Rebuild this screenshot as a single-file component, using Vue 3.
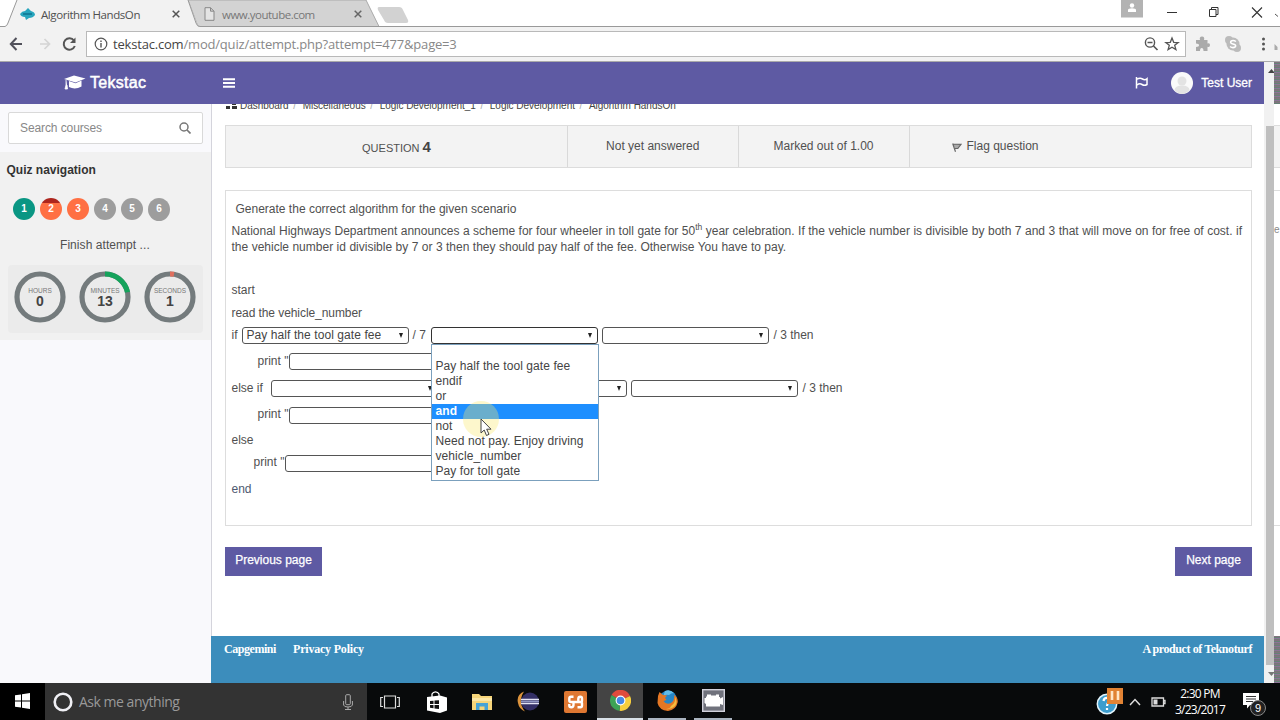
<template>
  <div class="screen">
    <!-- browser tabs -->
    <div class="tabs">
      <svg class="tabs-bg" width="1280" height="28" viewBox="0 0 1280 28">
        <path d="M188 0H366L379 26.5H198Z" fill="#d3d3d3" stroke="#aaa" />
        <path d="M0 26.500H6L17 0H188L198 26.500H1280V29H0Z" fill="#f2f2f2" />
        <path d="M0 26.500H5Q7 26 8 23L17 0M188 0L196 23Q197 26.500 200 26.500H1280" fill="none" stroke="#999" />
        <path d="M379 7H399Q402 7 403 10L408 20Q409 23 406 23H388Q385 23 384 20L378 10Q377 7 379 7Z" fill="#d2d2d2" />
      </svg>
      <div class="tab tab--active">
        <svg width="16" height="12" viewBox="0 0 16 12"><path d="M0 6Q2 3 5 3L8 0L11 3Q15 4 15 7Q13 10 9 10L6 12L5 9Q1 9 0 6Z" fill="#27a5bd" /><path d="M3 6H12" stroke="#137f9b" stroke-width="2" /></svg>
        <span>Algorithm HandsOn</span>
        <svg class="tab-close" width="8" height="8" viewBox="0 0 8 8"><path d="M.7.7L7.300 7.300M7.300.7L.7 7.300" stroke="#555" stroke-width="1.500" /></svg>
      </div>
      <div class="tab tab--idle">
        <svg width="11" height="14" viewBox="0 0 11 14"><path d="M1 .7H6.500L10 4.200V13.300H1ZM6.500.7V4.200H10" fill="#e4e4e4" stroke="#888" /></svg>
        <span>www.youtube.com</span>
        <svg class="tab-close" width="8" height="8" viewBox="0 0 8 8"><path d="M.7.7L7.300 7.300M7.300.7L.7 7.300" stroke="#666" stroke-width="1.500" /></svg>
      </div>
      <svg class="win-buttons" width="160" height="26" viewBox="0 0 160 26">
        <rect x="1" width="22" height="17.500" fill="#b3b3b3" />
        <circle cx="12" cy="5.500" r="2.200" fill="#fff" /><path d="M8 12V10Q8 8.300 12 8.300Q16 8.300 16 10V12Z" fill="#fff" />
        <path d="M47 12.500H57" stroke="#333" />
        <path d="M89.500 9.500H96V16.500H89.500ZM91.500 9.500V7.500H98V14.500H96" fill="none" stroke="#333" />
        <path d="M132 7.500L142 17.500M142 7.500L132 17.500" stroke="#333" stroke-width="1.100" />
        <path d="M155 14L158 16.500" stroke="#555" />
      </svg>
    </div>

    <!-- address bar -->
    <div class="toolbar">
      <svg class="nav-icons" width="86" height="34" viewBox="0 0 86 34">
        <path d="M22 17H11M16.500 11L10.800 17L16.500 23" fill="none" stroke="#50505a" stroke-width="2" />
        <path d="M40 17H49M44.500 12L49.500 17L44.500 22" fill="none" stroke="#d4d4d4" stroke-width="1.700" />
        <path d="M74 13.500A5.700 5.700 0 1 0 74.800 19" fill="none" stroke="#555" stroke-width="2" /><path d="M75.500 10.500V16H70Z" fill="#555" />
      </svg>
      <div class="address">
        <svg width="14" height="14" viewBox="0 0 14 14"><circle cx="7" cy="7" r="5.800" fill="none" stroke="#555" stroke-width="1.200" /><path d="M7 6V10.500M7 3.500V5" stroke="#555" stroke-width="1.400" /></svg>
        <span class="address-url"><b>tekstac.com</b>/mod/quiz/attempt.php?attempt=477&amp;page=3</span>
        <svg class="address-icons" width="37" height="16" viewBox="0 0 37 16">
          <circle cx="6" cy="6.500" r="4.600" fill="none" stroke="#555" stroke-width="1.400" /><path d="M9.500 10L13.500 14M3.500 6.500H8.500" stroke="#555" stroke-width="1.700" />
          <path d="M28 2L29.700 6.300L34.200 6.500L30.700 9.300L31.900 13.600L28 11.200L24.100 13.600L25.300 9.300L21.800 6.500L26.300 6.300Z" fill="none" stroke="#555" stroke-width="1.300" />
        </svg>
      </div>
      <svg class="ext-icons" width="94" height="34" viewBox="0 0 94 34">
        <path d="M10 13H14Q13 9.500 16 9.500Q19 9.500 18 13H21.500V16.500Q24 15.500 24 18Q24 20.500 21.500 19.700V24H17.500Q17.500 21 15.700 21Q14 21 14 24H10V20Q13 20 13 18.300Q13 16.500 10 16.500Z" fill="#aaa" />
        <g fill="#bbb"><circle cx="47" cy="17" r="6.500" /><circle cx="43" cy="13" r="4" /><circle cx="51" cy="21" r="4" /></g>
        <path d="M50 14.500Q47 12.500 44.800 14.300Q44 16.500 47 17Q50.500 17.800 49.500 19.600Q47 21.700 44 19.500" fill="none" stroke="#fff" stroke-width="1.500" />
        <g fill="#555"><circle cx="77.500" cy="12" r="1.500" /><circle cx="77.500" cy="17" r="1.500" /><circle cx="77.500" cy="22" r="1.500" /></g>
        <path d="M88.500 17L91.500 20V23H88.500Z" fill="#aaa" />
      </svg>
    </div>

    <div class="page">
      <div class="site">
        <header class="site-header">
          <div class="brand">
            <svg width="22" height="16" viewBox="0 0 22 16"><path d="M0 4L10 .500L21.500 3.500L11.500 7.500Z" fill="#fff" /><path d="M5 6V12Q11 15 17.500 11.500V5.500L11.500 8.300Z" fill="#fff" /><path d="M2 5V10L1 14H3.500L3 10" fill="#fff" stroke="#fff" stroke-width=".8" /></svg>
            <span>Tekstac</span>
          </div>
          <svg class="menu-icon" width="12" height="10" viewBox="0 0 12 10"><path d="M0 1.200H12M0 5H12M0 8.800H12" stroke="#fff" stroke-width="2" /></svg>
          <div class="user">
            <svg width="13" height="12" viewBox="0 0 13 12"><path d="M1.500 0V11.500M2 2.200Q5 .5 7.500 2T12 1.700V7.500Q9.500 9 7 7.500T2 8" fill="none" stroke="#fff" stroke-width="1.500" /></svg>
            <svg class="avatar" width="22" height="22" viewBox="0 0 22 22"><circle cx="11" cy="11" r="11" fill="#fafafa" /><circle cx="11" cy="9" r="4.500" fill="#e3e3e3" /><path d="M3.500 18Q4 13.500 11 13.500T18.500 18Q15 22 11 22T3.500 18Z" fill="#e3e3e3" /></svg>
            <span>Test User</span>
          </div>
        </header>

        <div class="columns">
          <aside class="sidebar">
            <div class="search-wrap">
              <div class="search">
                <span>Search courses</span>
                <svg width="12" height="12" viewBox="0 0 12 12"><circle cx="5" cy="5" r="4" fill="none" stroke="#777" stroke-width="1.500" /><path d="M8 8L11.500 11.500" stroke="#777" stroke-width="1.700" /></svg>
              </div>
            </div>
            <div class="quiz-nav">
              <h2>Quiz navigation</h2>
              <div class="bullets">
                <span v-for="n in 6" :key="n" class="bullet" :class="bulletClass[n - 1]">{{ n }}</span>
              </div>
              <div class="finish">Finish attempt ...</div>
              <div class="timer">
                <div v-for="t in timers" :key="t.label" class="dial">
                  <svg width="52" height="52" viewBox="0 0 52 52">
                    <circle cx="26" cy="26" r="23" fill="none" stroke="#747b7d" stroke-width="5.200" />
                    <path v-if="t.arc" :d="t.arc" fill="none" :stroke="t.color" stroke-width="5.200" />
                  </svg>
                  <div class="dial-text"><small>{{ t.label }}</small><b>{{ t.value }}</b></div>
                </div>
              </div>
            </div>
          </aside>

          <main class="content">
            <div class="crumbs-clip">
              <div class="crumbs">
                <svg width="11" height="10" viewBox="0 0 11 10"><path d="M1 0H5V4H1ZM6 1H10V5H6ZM0 6H4V9H0ZM6 6H11V9H6Z" fill="#333" /></svg>
                <template v-for="(c, i) in crumbs" :key="c"><i v-if="i">/</i><span>{{ c }}</span></template>
              </div>
            </div>
            <div class="info">
              <div class="info-no">QUESTION <b>4</b></div>
              <div class="info-state">Not yet answered</div>
              <div class="info-mark">Marked out of 1.00</div>
              <div class="info-flag">
                <svg width="10" height="11" viewBox="0 0 10 11"><path d="M.7 1.500L3.500 9.800M1 2L9 2.300L5.800 6.500L3 6.500" fill="#aaa" stroke="#666" stroke-width="1.200" /></svg>
                <span>Flag question</span>
              </div>
            </div>

            <div class="question">
              <p class="line title">Generate the correct algorithm for the given scenario</p>
              <div class="scenario">
                <p class="first">National Highways Department announces a scheme for four wheeler in toll gate for 50<sup>th</sup> year celebration. If the vehicle number is divisible by both 7 and 3 that will move on for free of cost. if</p>
                <p class="second">the vehicle number id divisible by 7 or 3 then they should pay half of the fee. Otherwise You have to pay.</p>
              </div>
              <p class="line start">start</p>
              <p class="line read">read the vehicle_number</p>
              <div class="line cond-if">
                <span class="w-if">if</span>
                <span class="select">Pay half the tool gate fee</span>
                <span class="w-div">/ 7</span>
                <span class="select select--open">
                  <ul class="menu">
                    <li v-for="o in options" :key="o" :class="{ hover: o === 'and' }">{{ o }}</li>
                  </ul>
                </span>
                <span class="select last"></span>
                <span class="w-then">/ 3 then</span>
              </div>
              <div class="line print1"><span>print "</span><span class="select"></span></div>
              <div class="line cond-else">
                <span class="w-elseif">else if</span>
                <span class="select"></span>
                <span class="w-div"></span>
                <span class="select"></span>
                <span class="select last"></span>
                <span class="w-then">/ 3 then</span>
              </div>
              <div class="line print2"><span>print "</span><span class="select"></span></div>
              <p class="line else">else</p>
              <div class="line print3"><span>print "</span><span class="select"></span></div>
              <p class="line end">end</p>
            </div>

            <div class="pager">
              <button class="prev">Previous page</button>
              <button class="next">Next page</button>
            </div>
            <footer class="footer">
              <span class="f1">Capgemini</span><span class="f2">Privacy Policy</span><span class="f3">A product of Teknoturf</span>
            </footer>
          </main>
        </div>
      </div>
      <div class="scrollbar">
        <svg width="10" height="6" viewBox="0 0 10 6"><path d="M4 5L7.500 1L10 4V5Z" fill="#444" /></svg>
        <div class="thumb"></div>
        <svg width="10" height="6" viewBox="0 0 10 6"><path d="M4 1L7.500 5L10 2V1Z" fill="#777" /></svg>
      </div>
      <div class="edge">
        <div class="noise noise-top"></div>
        <div class="edge-mid"><div class="edge-info"></div><div class="edge-box"><span>e</span></div></div>
        <div class="noise noise-bottom"></div>
      </div>
    </div>

    <div class="taskbar">
      <div class="start-btn"><svg width="15" height="16" viewBox="0 0 15 16"><path d="M0 2.300L6 1.400V7.500H0ZM7 1.200L15 0V7.500H7ZM0 8.500H6V14.600L0 13.700ZM7 8.500H15V16L7 14.800Z" fill="#fff" /></svg></div>
      <div class="cortana">
        <svg width="20" height="20" viewBox="0 0 20 20"><circle cx="10" cy="10" r="8.300" fill="none" stroke="#f0f0f5" stroke-width="2.600" /></svg>
        <span>Ask me anything</span>
        <svg class="mic" width="10" height="16" viewBox="0 0 10 16"><rect x="2.700" y=".7" width="4.600" height="10" rx="1" fill="none" stroke="#aaa" /><path d="M.6 7V11Q1 13 5 13T9.400 11V7M5 13V15.500M2 15.500H8" fill="none" stroke="#aaa" /></svg>
      </div>
      <div class="app taskview"><svg width="20" height="14" viewBox="0 0 20 14"><path d="M4.500 1H15.500V13H4.500ZM3 2.500H.7V11.500H3M17 2.500H19.300V11.500H17" fill="none" stroke="#ddd" stroke-width="1.200" /></svg></div>
      <div class="app store"><svg width="20" height="22" viewBox="0 0 20 22"><path d="M0 6L13 4.500L20 6.500V19.500L13 22L0 19.500Z" fill="#fff" /><path d="M5 6V3Q6 .8 8.500.8T12 3V6" fill="none" stroke="#fff" stroke-width="1.300" /><path d="M3 10L6.500 9.700V13H3ZM7.500 9.600L12 9.200V13H7.500ZM3 14H6.500V17.200L3 16.800ZM7.500 14H12V18L7.500 17.400Z" fill="#111" /></svg></div>
      <div class="app"><svg width="20" height="18" viewBox="0 0 20 18"><path d="M0 1H7L9 3H20V17H0Z" fill="#f6d57a" /><path d="M0 5H20V8H0Z" fill="#fbe6a5" /><path d="M4 17V10H16V17H12.500V13.500H7.500V17Z" fill="#46a3d6" /></svg></div>
      <div class="app"><svg width="23" height="21" viewBox="0 0 23 21"><path d="M7 .5Q-1 4 1 12Q2 18 8 20.500Q3 14 4 8Q4.500 4 7 .5Z" fill="#dc933c" /><circle cx="13" cy="10.500" r="9" fill="#332f65" /><path d="M4 8.500H22M4 12.500H22" stroke="#e3e3f3" stroke-width="1.500" /><path d="M4 10.500H22" stroke="#8f95c2" stroke-width="1.500" /></svg></div>
      <div class="app xampp"><svg width="23" height="22" viewBox="0 0 23 22"><rect width="23" height="22" rx="2" fill="#df7832" /><path d="M9.500 5.800H7Q5.300 5.800 5.300 7.500V9.500Q5.300 11 7 11H16.500Q18 11 18 9.500V7.500Q18 5.800 16.300 5.800Q14.300 5.800 14.300 8V11M9.500 11V13.800Q9.500 16.200 7.300 16.200Q5.300 16.200 5.300 14.500V13M13.500 16.200H16.300Q18 16.200 18 14.500V12.500Q18 11 16.500 11" fill="none" stroke="#fff" stroke-width="2.400" /></svg></div>
      <div class="app app--active"><svg width="21" height="21" viewBox="0 0 21 21"><path d="M10.500 10.500L1.600 5A10.300 10.300 0 0 1 20 6Z" fill="#df4b3c" /><path d="M10.500 10.500L20 6A10.300 10.300 0 0 1 9.500 20.800Z" fill="#f6ce3e" /><path d="M10.500 10.500L9.500 20.800A10.300 10.300 0 0 1 1.600 5Z" fill="#3da356" /><circle cx="10.500" cy="10.500" r="4.900" fill="#fff" /><circle cx="10.500" cy="10.500" r="3.800" fill="#4688e5" /></svg></div>
      <div class="app app--run firefox"><svg width="21" height="21" viewBox="0 0 21 21"><circle cx="11" cy="9.500" r="9" fill="#2586c7" /><path d="M8 1Q13-1 17 3Q14 3 12 5Q7 4 6 7Z" fill="#61bbe8" /><path d="M1 6L2.500 2L6 5L10 5.500L8 8L9.500 10L6.500 11Q9 15 14 13Q18 10 17 5Q21 7 20.800 12Q19 20 11 21Q2 20 .5 13Z" fill="#e47724" /><path d="M14 16Q19 13 18 7Q21 12 18 16Q14 20 9 19Q13 19 14 16Z" fill="#f4bd3f" /></svg></div>
      <div class="app app--run recorder"><svg width="23" height="23" viewBox="0 0 23 23"><rect x=".7" y=".7" width="21.600" height="21.600" fill="#70727c" stroke="#d2d2dc" stroke-width="1.400" /><path d="M4 7.500H5V5.500H9V6.500H14V5.500H17V8H18V9.500L21 8V16L18 15V17.500H4V15L2.500 14V9H4Z" fill="#fff" /></svg></div>
      <div class="tray">
        <svg class="tray-help" width="29" height="28" viewBox="0 0 29 28"><circle cx="11" cy="16" r="9.700" fill="#3d9dce" stroke="#e3f4fb" stroke-width="1.500" /><path d="M7.500 13Q8 9.500 11.500 10Q14.500 11 13 14Q11 15.500 11 18M11 20V22" fill="none" stroke="#fff" stroke-width="2.200" /><rect x="11" y="0" width="16" height="16" fill="#e18334" /><path d="M16 3V12M22 3V12" stroke="#ffe6c8" stroke-width="2.600" /></svg>
        <svg class="tray-up" width="12" height="8" viewBox="0 0 12 8"><path d="M1 7L6 1.500L11 7" fill="none" stroke="#ddd" stroke-width="1.500" /></svg>
        <svg class="tray-battery" width="15" height="10" viewBox="0 0 15 10"><path d="M1 1H12.500V9H1ZM12.500 3.500H14V6.500H12.500" fill="none" stroke="#ddd" stroke-width="1.300" /><path d="M2.500 2.500H6.500V7.500H2.500Z" fill="#ddd" /></svg>
        <div class="clock"><span>2:30 PM</span><span>3/23/2017</span></div>
        <div class="notify">
          <svg width="16" height="16" viewBox="0 0 16 16"><path d="M0 0H16V12H7L4 15.500V12H0Z" fill="#fff" /><path d="M3 3.500H13M3 6H13M3 8.500H10" stroke="#333" /></svg>
          <span>9</span>
        </div>
      </div>
    </div>

    <!-- pointer with click highlight -->
    <div class="pointer">
      <div class="halo"></div>
      <svg width="12" height="19" viewBox="0 0 12 19"><path d="M1 1V15L4.200 12L6.500 17.500L9 16.300L6.700 11.200H11Z" fill="#fff" stroke="#444" /></svg>
    </div>
  </div>
</template>

<script setup>
const bulletClass = ['done', 'partial', 'current', '', '', 'tail']

const timers = [
  { label: 'HOURS', value: 0 },
  { label: 'MINUTES', value: 13, color: '#15a35b', arc: 'M26 3A23 23 0 0 1 48.5 21.300' },
  { label: 'SECONDS', value: 1, color: '#e0705f', arc: 'M26 3A23 23 0 0 1 30 3.300' }
]

const crumbs = ['Dashboard', 'Miscellaneous', 'Logic Development_1', 'Logic Development', 'Algorithm HandsOn']

const options = [
  '',
  'Pay half the tool gate fee',
  'endif',
  'or',
  'and',
  'not',
  'Need not pay. Enjoy driving',
  'vehicle_number',
  'Pay for toll gate'
]
</script>

<style>
body {
  overflow: hidden;
}
</style>

<style scoped>
* {
  box-sizing: border-box;
}

.screen {
  width: 1280px;
  height: 720px;
  position: relative;
  display: flex;
  flex-direction: column;
  overflow: hidden;
  background: #fff;
  color: #505050;
  font-family: "Liberation Sans", Arial, sans-serif;
  font-size: 12px;
}

svg {
  display: block;
  flex: none;
}

p,
h2,
ul {
  margin: 0;
  padding: 0;
}

.tabs {
  height: 27px;
  position: relative;
  display: flex;
  font-family: "Open Sans", "Noto Sans", sans-serif;
  font-size: 11.5px;
}

.tabs-bg {
  position: absolute;
  left: 0;
  top: 0;
}

.tab {
  position: relative;
  display: flex;
  align-items: center;
  height: 28px;
  white-space: nowrap;
}

.tab--active {
  width: 180px;
  padding-left: 20px;
}

.tab--active span {
  margin-left: 5px;
  letter-spacing: -0.42px;
}

.tab--idle {
  width: 182px;
  padding-left: 24px;
}

.tab--idle span {
  margin-left: 7px;
  color: #777;
  letter-spacing: -0.5px;
}

.tab-close {
  margin-left: auto;
}

.win-buttons {
  margin-left: auto;
  position: relative;
}

.toolbar {
  height: 35px;
  display: flex;
  background: #f2f2f2;
  border-bottom: 1px solid #aaa;
}

.address {
  width: 1100px;
  height: 26px;
  margin-top: 4px;
  padding-left: 7px;
  display: flex;
  align-items: center;
  background: #fff;
  border: 1px solid #b9b9b9;
  font-family: "Open Sans", "Noto Sans", sans-serif;
}

.address-url {
  margin-left: 5px;
  color: #888;
  font-size: 13px;
  letter-spacing: -0.19px;
  white-space: nowrap;
}

.address-url b {
  color: #444;
  font-weight: 400;
}

.address-icons {
  margin-left: auto;
  margin-right: 4px;
}

.page {
  height: 621px;
  display: flex;
}

.site {
  width: 1264px;
}

.site-header {
  height: 42px;
  display: flex;
  align-items: center;
  background: #5e5aa3;
  color: #fff;
}

.brand {
  width: 223px;
  padding-left: 64px;
  display: flex;
  align-items: center;
  font-size: 16px;
  letter-spacing: 0.3px;
  -webkit-text-stroke: 0.5px #fff;
}

.brand span {
  margin-left: 4px;
}

.user {
  margin-left: auto;
  margin-right: 12px;
  display: flex;
  align-items: center;
  font-size: 12px;
  -webkit-text-stroke: 0.3px #fff;
}

.avatar {
  margin: 0 8px 0 23px;
}

.columns {
  height: 579px;
  display: flex;
}

.sidebar {
  width: 212px;
  background: #f9f9fc;
  border-right: 1px solid #d4d4dc;
}

.search-wrap {
  height: 48px;
  padding: 8px 8px 0;
}

.search {
  height: 32px;
  padding: 0 11px 1px;
  display: flex;
  align-items: center;
  justify-content: space-between;
  border: 1px solid #d9d9d9;
  border-radius: 2px;
  background: #fff;
  color: #888;
}

.search span {
  letter-spacing: -0.1px;
}

.quiz-nav {
  height: 188px;
  background: #f1f1f1;
}

.quiz-nav h2 {
  height: 36px;
  padding-left: 6.5px;
  line-height: 36px;
  color: #333;
  font-size: 12px;
}

.bullets {
  height: 42px;
  padding: 10px 0 0 13px;
  display: flex;
  gap: 5px;
}

.bullet {
  width: 22px;
  height: 22px;
  border-radius: 50%;
  background: #9d9d9d;
  color: #fff;
  font-size: 10px;
  font-weight: bold;
  line-height: 22px;
  text-align: center;
}

.bullet.done {
  background: #0a9683;
}

.bullet.partial {
  background: linear-gradient(#ad251d 5px, #ff7043 5px);
}

.bullet.current {
  background: #ff7043;
}

.bullet.tail {
  height: 23px;
}

.finish {
  height: 34px;
  padding-left: 60px;
  line-height: 30px;
  letter-spacing: 0.06px;
}

.timer {
  height: 68px;
  margin: 1px 8px 0;
  padding: 6px 7px 0 6px;
  display: flex;
  justify-content: space-between;
  border-radius: 4px;
  background: #ebebeb;
}

.dial {
  position: relative;
  width: 52px;
  height: 52px;
}

.dial-text {
  position: absolute;
  inset: 0;
  padding-top: 16px;
  display: flex;
  flex-direction: column;
  align-items: center;
  color: #444;
}

.dial-text small {
  color: #777;
  font-size: 6.5px;
  line-height: 7px;
}

.dial-text b {
  font-size: 14px;
  line-height: 15px;
}

.content {
  width: 1052px;
  display: flex;
  flex-direction: column;
}

/* the trail is scrolled halfway under the header */
.crumbs-clip {
  height: 21px;
  overflow: hidden;
}

.crumbs {
  margin-top: -6px;
  padding-left: 14px;
  display: flex;
  align-items: center;
  height: 14px;
  font-size: 10px;
  letter-spacing: -0.03px;
  color: #444;
  white-space: nowrap;
}

.crumbs span {
  margin-left: 3px;
}

.crumbs i {
  width: 10px;
  margin-left: 1px;
  text-align: center;
  font-style: normal;
  color: #aaa;
}

.info {
  width: 1027px;
  height: 43px;
  margin-left: 13px;
  display: flex;
  border: 1px solid #dcdcdc;
  background: #f3f3f3;
  line-height: 40px;
  text-align: center;
}

.info-no {
  width: 342px;
  border-right: 1px solid #d9d9d9;
  font-size: 11px;
  line-height: 42px;
}

.info-no b {
  color: #444;
  font-size: 15px;
}

.info-state {
  width: 170.5px;
  border-right: 1px solid #d9d9d9;
}

.info-mark {
  width: 171px;
  border-right: 1px solid #d9d9d9;
}

.info-flag {
  padding-left: 42px;
  display: flex;
}

.info-flag svg {
  margin: 16px 5px 0 0;
}

.question {
  width: 1027px;
  height: 336px;
  margin: 22px 0 0 13px;
  padding: 10px 9px 0 5.5px;
  border: 1px solid #ddd;
}

.line {
  height: 16px;
  display: flex;
  line-height: 16px;
  white-space: pre;
}

.title {
  padding-left: 4px;
}

.scenario {
  margin-top: 6px;
  line-height: 16px;
}

.scenario p {
  height: 16px;
  width: 1010.5px;
  white-space: nowrap;
}

.scenario .first {
  text-align: justify;
  text-align-last: justify;
  white-space: normal;
}

.scenario .second {
  word-spacing: 0.12px;
}

.scenario sup {
  font-size: 8.5px;
  line-height: 0;
}

.start { margin-top: 27px; }
.read { margin-top: 7px; letter-spacing: -0.07px; }
.cond-if { margin-top: 6px; }
.print1 { margin-top: 10px; padding-left: 26px; }
.cond-else { margin-top: 11px; }
.print2 { margin-top: 10px; padding-left: 26px; }
.else { margin-top: 10px; }
.print3 { margin-top: 6px; padding-left: 22px; }
.end { margin-top: 11px; color: #4d5a70; }

.print1 > span:first-child,
.print2 > span:first-child,
.print3 > span:first-child {
  width: 31px;
}

.w-if { width: 10px; }
.w-elseif { width: 39px; }

.w-div {
  width: 22px;
  padding-left: 4px;
}

.w-then {
  margin-left: 5px;
}

.select {
  position: relative;
  flex: none;
  width: 167px;
  height: 17px;
  padding-left: 4px;
  border: 1px solid #555;
  border-radius: 3px;
  background: #fff;
  color: #444;
  line-height: 15px;
  letter-spacing: 0.08px;
}

.print2 .select,
.print3 .select {
  margin-top: 0.5px;
}

.select::after {
  content: "";
  position: absolute;
  right: 5px;
  top: 5px;
  border: 2.5px solid transparent;
  border-top: 5px solid #222;
  border-bottom: 0;
}

.select.last {
  margin-left: 4px;
}

.select--open {
  border-color: #333;
}

.menu {
  position: absolute;
  z-index: 5;
  left: -1px;
  top: 16px;
  width: 168px;
  height: 137px;
  border: 1px solid #7ba0bd;
  background: #fff;
  list-style: none;
  color: #444;
}

.menu li {
  height: 15px;
  padding-left: 4px;
  line-height: 15px;
}

.menu li:first-child {
  height: 14px;
}

.menu .hover {
  background: #1e8fff;
  color: #fff;
  font-weight: bold;
}

.pager {
  height: 110px;
  padding: 21px 12px 0 13px;
  display: flex;
  justify-content: space-between;
}

.pager button {
  height: 29px;
  padding: 0 0 3px;
  border: 0;
  background: #5e5aa3;
  color: #fff;
  font: 12px "Liberation Sans", Arial, sans-serif;
  -webkit-text-stroke: 0.25px #fff;
}

.prev { width: 97px; }
.next { width: 77px; }

.footer {
  flex: 1;
  margin-left: -1px;
  padding: 5px 12px 0 13px;
  display: flex;
  background: #3c8dbc;
  color: #fff;
  font: bold 12px/16px "Liberation Serif", "Times New Roman", serif;
}

.f1 {
  width: 52px;
  letter-spacing: -0.45px;
}

.f2 {
  margin-left: 17px;
  letter-spacing: -0.2px;
}

.f3 {
  margin-left: auto;
  letter-spacing: -0.42px;
}

.scrollbar {
  width: 10px;
  padding: 6px 0 5px;
  display: flex;
  flex-direction: column;
  background: #f1f1f1;
}

.thumb {
  width: 8px;
  height: 539px;
  margin: 52px 0 6px 2px;
  background: #bfbfbf;
}

.edge {
  width: 6px;
  display: flex;
  flex-direction: column;
}

.noise {
  background: repeating-linear-gradient(#81727e 0 1px, #658276 1px 2px, #8c7397 2px 3px, #777 3px 4px);
}

.noise-top { height: 42px; }
.noise-bottom { height: 47px; }

.edge-mid {
  height: 532px;
  padding-top: 21px;
}

.edge-info {
  height: 43px;
  border: solid #ddd;
  border-width: 1px 0;
  background: #f3f3f3;
}

.edge-box {
  height: 336px;
  margin-top: 22px;
  padding-top: 33px;
  border: solid #ddd;
  border-width: 1px 0;
  overflow: hidden;
  color: #888;
  font-size: 10px;
}

.taskbar {
  height: 37px;
  display: flex;
  background: #080a0b;
  color: #fff;
}

.start-btn {
  width: 45px;
  padding: 10px 0 0 15px;
  background: #000;
}

.cortana {
  width: 322px;
  padding: 0 14px 0 8px;
  display: flex;
  align-items: center;
  background: #333;
  color: #999;
  font-family: "Open Sans", "Noto Sans", sans-serif;
  font-size: 14px;
}

.cortana span {
  margin-left: 6px;
  letter-spacing: -0.48px;
}

.mic {
  margin-left: auto;
}

.app {
  width: 46px;
  display: flex;
  align-items: center;
  justify-content: center;
}

.store {
  padding-left: 2px;
}

.xampp {
  padding-left: 2px;
}

.app--active {
  background: #444;
  border-bottom: 2px solid #d9e1e8;
}

.app--run {
  border-bottom: 2px solid #aab4c0;
}

.firefox {
  width: 38px;
  margin-left: 5px;
}

.recorder {
  width: 38px;
  margin-left: 8px;
}

.tray {
  margin-left: auto;
  padding-right: 16px;
  display: flex;
  align-items: center;
}

.tray-up { margin-left: 4px; }
.tray-battery { margin-left: 10px; }

.clock {
  width: 66px;
  margin-left: 1px;
  display: flex;
  flex-direction: column;
  align-items: center;
  font-family: "Open Sans", "Noto Sans", sans-serif;
  font-size: 12px;
  line-height: 16px;
  letter-spacing: -0.75px;
}

.notify {
  position: relative;
  margin: -2px 5px 0 10px;
}

.notify span {
  position: absolute;
  left: 7px;
  top: 7px;
  width: 16px;
  height: 16px;
  border: 1px solid #888;
  border-radius: 50%;
  background: #222;
  font-size: 11px;
  line-height: 14px;
  text-align: center;
}

.pointer {
  position: absolute;
  z-index: 10;
  left: 463px;
  top: 401px;
  width: 36px;
  height: 36px;
}

.halo {
  width: 36px;
  height: 36px;
  border-radius: 50%;
  background: rgba(248, 233, 110, 0.35);
}

.pointer svg {
  position: absolute;
  left: 17px;
  top: 17px;
}
</style>
